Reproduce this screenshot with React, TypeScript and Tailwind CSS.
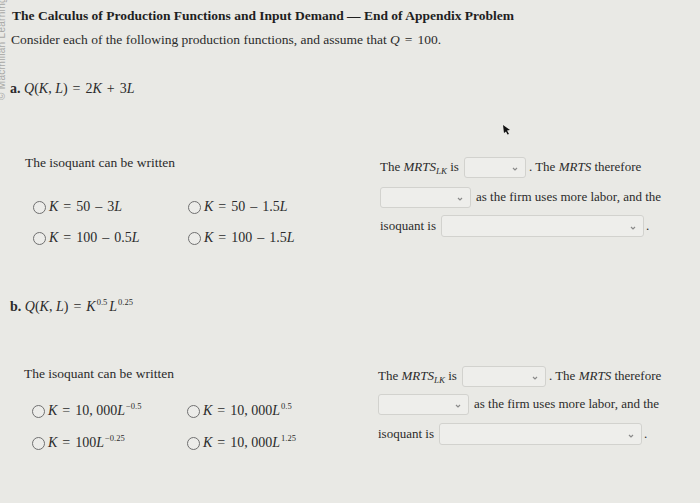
import React from "react";

const I = ({ children }: { children: React.ReactNode }) => <span className="italic">{children}</span>;
const Sup = ({ children }: { children: React.ReactNode }) => (
  <span className="text-[8.5px] relative top-[-6px] leading-none not-italic ml-[1px]">{children}</span>
);
const Op = ({ c }: { c: string }) => <span className="mx-[5px]">{c}</span>;

function Select({ w, h = 21 }: { w: number; h?: number }) {
  return (
    <span
      className="inline-flex items-center justify-end rounded-[3px] border border-[#d2d2ce] bg-[#eeeeeb] pr-[7px]"
      style={{ width: w, height: h }}
    >
      <svg width="6" height="4" viewBox="0 0 6 4" className="mt-[4px]">
        <path d="M1 1 L3 3 L5 1" stroke="#8a8a8a" strokeWidth="1.2" fill="none" />
      </svg>
    </span>
  );
}

function Radio() {
  return <span className="inline-block w-[13px] h-[13px] rounded-full border-[1.5px] border-[#707070] bg-[#ecece9] shrink-0" />;
}

function Opt({ children }: { children: React.ReactNode }) {
  return (
    <div className="flex items-center gap-[3px] h-[18px]">
      <Radio />
      <span className="leading-[18px] whitespace-nowrap">{children}</span>
    </div>
  );
}

function MRTS() {
  return (
    <>
      The <I>MRTS</I>
      <span className="text-[9px] italic relative top-[3px] leading-none">LK</span> is
    </>
  );
}

function RightBlock({ w1, gapTop }: { w1: number; gapTop: [number, number] }) {
  return (
    <div className="flex flex-col text-[13px]">
      <div className="flex items-center h-[22px]">
        <span className="mr-[5px]">
          <MRTS />
        </span>
        <Select w={w1} />
        <span className="ml-[3px]">
          . The <I>MRTS</I> therefore
        </span>
      </div>
      <div className="flex items-center h-[22px]" style={{ marginTop: gapTop[0] }}>
        <Select w={91} />
        <span className="ml-[5px]">as the firm uses more labor, and the</span>
      </div>
      <div className="flex items-center h-[22px]" style={{ marginTop: gapTop[1] }}>
        <span className="mr-[5px]">isoquant is</span>
        <Select w={203} h={22} />
        <span className="ml-[2px]">.</span>
      </div>
    </div>
  );
}

export default function App() {
  return (
    <div className="relative w-[700px] h-[503px] overflow-hidden bg-[#e9e9e5] text-[#2b2b2b] font-['Liberation_Serif',serif]">
      <div className="absolute left-[-6px] top-[100px] origin-top-left -rotate-90 text-[10px] text-[#a8a8a6] whitespace-nowrap font-['Liberation_Sans',sans-serif] tracking-[0.3px]">
        © Macmillan Learning
      </div>
      <svg className="absolute left-[502px] top-[124px]" width="10" height="12" viewBox="0 0 10 12">
        <path d="M1 1 L8 6 L5 6.5 L7 10 L5.5 10.5 L4 7.5 L2 9 Z" fill="#111" />
      </svg>

      <div className="pl-[10px] pt-[6px]">
        <div className="ml-[2px] h-[20px] leading-[20px] text-[13.5px] font-bold text-[#1f1f1f] whitespace-nowrap">
          The Calculus of Production Functions and Input Demand — End of Appendix Problem
        </div>
        <div className="ml-[1px] mt-[5px] h-[18px] leading-[18px] text-[13.5px]">
          Consider each of the following production functions, and assume that <I>Q</I>
          <Op c="=" />
          100.
        </div>
        <div className="mt-[31px] h-[18px] leading-[18px] text-[14px]">
          <span className="font-bold">a.</span> <I>Q</I>(<I>K</I>, <I>L</I>)
          <Op c="=" />2<I>K</I>
          <Op c="+" />3<I>L</I>
        </div>

        <div className="mt-[56px] flex">
          <div className="w-[370px] pl-[15px] text-[13.5px]">
            <div className="h-[18px] leading-[18px]">The isoquant can be written</div>
            <div className="ml-[8px] mt-[26px] grid grid-cols-[155px_auto] gap-y-[13px] text-[14px]">
              <Opt>
                <I>K</I>
                <Op c="=" />50
                <Op c="–" />3<I>L</I>
              </Opt>
              <Opt>
                <I>K</I>
                <Op c="=" />50
                <Op c="–" />1.5<I>L</I>
              </Opt>
              <Opt>
                <I>K</I>
                <Op c="=" />100
                <Op c="–" />0.5<I>L</I>
              </Opt>
              <Opt>
                <I>K</I>
                <Op c="=" />100
                <Op c="–" />1.5<I>L</I>
              </Opt>
            </div>
          </div>
          <div className="pt-[2px]">
            <RightBlock w1={62} gapTop={[8, 7]} />
          </div>
        </div>

        <div className="mt-[51px] h-[18px] leading-[18px] text-[14px]">
          <span className="font-bold">b.</span> <I>Q</I>(<I>K</I>, <I>L</I>)
          <Op c="=" />
          <I>K</I>
          <Sup>0.5</Sup>
          <span className="ml-[2px]">
            <I>L</I>
          </span>
          <Sup>0.25</Sup>
        </div>

        <div className="mt-[49px] flex">
          <div className="w-[368px] pl-[14px] text-[13.5px]">
            <div className="h-[18px] leading-[18px]">The isoquant can be written</div>
            <div className="ml-[8px] mt-[19px] grid grid-cols-[155px_auto] gap-y-[14px] text-[14px]">
              <Opt>
                <I>K</I>
                <Op c="=" />
                10, 000<I>L</I>
                <Sup>−0.5</Sup>
              </Opt>
              <Opt>
                <I>K</I>
                <Op c="=" />
                10, 000<I>L</I>
                <Sup>0.5</Sup>
              </Opt>
              <Opt>
                <I>K</I>
                <Op c="=" />
                100<I>L</I>
                <Sup>−0.25</Sup>
              </Opt>
              <Opt>
                <I>K</I>
                <Op c="=" />
                10, 000<I>L</I>
                <Sup>1.25</Sup>
              </Opt>
            </div>
          </div>
          <div>
            <RightBlock w1={84} gapTop={[6, 8]} />
          </div>
        </div>
      </div>
    </div>
  );
}
